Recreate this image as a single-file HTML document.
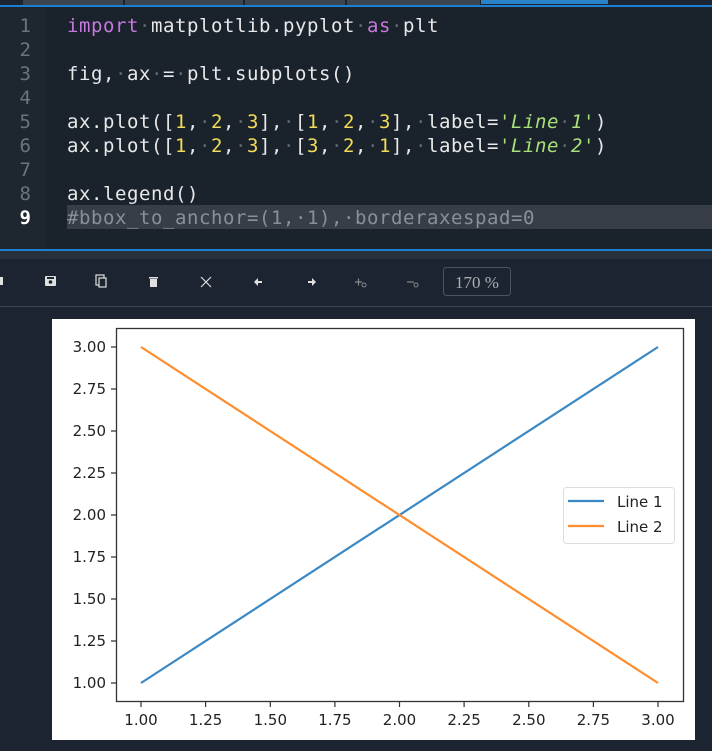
<!DOCTYPE html>
<html><head><meta charset="utf-8"><style>
body{margin:0;width:712px;height:751px;background:#1b2430;overflow:hidden;position:relative;font-family:"Liberation Sans",sans-serif}
.tab{position:absolute;top:0;height:5px;background:#3b444f}
#ed{position:absolute;top:8px;left:0;width:712px;height:241px;background:#1a222c}
#gut{position:absolute;left:0;top:0;width:46px;height:241px;background:#1e2630}
.ln{position:absolute;left:0;width:31px;text-align:right;font:19px "DejaVu Sans Mono",monospace;color:#6c747c;height:24px;line-height:24px}
.cl{position:absolute;left:67px;font:19px "DejaVu Sans Mono",monospace;letter-spacing:0.56px;color:#e8e8e8;white-space:pre;height:24px;line-height:24px}
.k{color:#c678dd}.n{color:#f2dc5a}.s{color:#a8e07a;font-style:italic}.d{color:#5c6670}
</style></head><body>
<div class="tab" style="left:23px;width:100px"></div>
<div class="tab" style="left:125px;width:118px"></div>
<div class="tab" style="left:245px;width:100px"></div>
<div class="tab" style="left:347px;width:133px"></div>
<div class="tab" style="left:481px;width:127px;background:#2b82c8;height:4px"></div>
<div style="position:absolute;top:5px;left:0;width:712px;height:2px;background:#1f7fd0"></div>
<div id="ed"><div id="gut"></div>
<div style="position:absolute;left:67px;top:197px;width:645px;height:24px;background:#373e46"></div>
<div class="ln" style="top:6px">1</div><div class="ln" style="top:30px">2</div><div class="ln" style="top:54px">3</div><div class="ln" style="top:78px">4</div><div class="ln" style="top:102px">5</div><div class="ln" style="top:126px">6</div><div class="ln" style="top:150px">7</div><div class="ln" style="top:174px">8</div><div class="ln" style="top:198px;color:#fff;font-weight:bold">9</div>
<div class="cl" style="top:6px"><span class="k">import</span><span class="d">·</span>matplotlib.pyplot<span class="d">·</span><span class="k">as</span><span class="d">·</span>plt</div>
<div class="cl" style="top:54px">fig,<span class="d">·</span>ax<span class="d">·</span>=<span class="d">·</span>plt.subplots()</div>
<div class="cl" style="top:102px">ax.plot([<span class="n">1</span>,<span class="d">·</span><span class="n">2</span>,<span class="d">·</span><span class="n">3</span>],<span class="d">·</span>[<span class="n">1</span>,<span class="d">·</span><span class="n">2</span>,<span class="d">·</span><span class="n">3</span>],<span class="d">·</span>label=<span class="s">'Line<span class="d">·</span>1'</span>)</div>
<div class="cl" style="top:126px">ax.plot([<span class="n">1</span>,<span class="d">·</span><span class="n">2</span>,<span class="d">·</span><span class="n">3</span>],<span class="d">·</span>[<span class="n">3</span>,<span class="d">·</span><span class="n">2</span>,<span class="d">·</span><span class="n">1</span>],<span class="d">·</span>label=<span class="s">'Line<span class="d">·</span>2'</span>)</div>
<div class="cl" style="top:174px">ax.legend()</div>
<div class="cl" style="top:198px;color:#8a9097">#bbox_to_anchor=(1,·1),·borderaxespad=0</div>
</div>
<div style="position:absolute;top:249px;left:0;width:712px;height:2px;background:#1f7fd0"></div>
<div style="position:absolute;top:251px;left:0;width:712px;height:8px;background:#28313b"></div>
<div style="position:absolute;top:306px;left:0;width:712px;height:1px;background:#3a4550"></div>
<svg style="position:absolute;left:0;top:260px" width="520" height="45" fill="#e0e0e0">
<rect x="0" y="17" width="3" height="8"/>
<rect x="45" y="16" width="11" height="10" rx="1"/><circle cx="50.5" cy="22" r="1.8" fill="#1b2430"/><rect x="47" y="17" width="7" height="2" fill="#1b2430"/>
<rect x="96" y="15" width="8" height="10" fill="none" stroke="#e0e0e0" stroke-width="1.2"/><rect x="99" y="18" width="7" height="9" fill="#1b2430" stroke="#e0e0e0" stroke-width="1.2"/>
<rect x="150" y="19" width="7" height="8"/><rect x="149" y="17" width="9" height="1.5"/>
<path d="M201 17l10 10M211 17l-10 10" stroke="#e0e0e0" stroke-width="1.2"/>
<path d="M254 22l4-4v3h4v2h-4v3z"/><path d="M316 22l-4-4v3h-4v2h4v3z"/>
<path d="M355 22h7M358.5 18.5v7" stroke="#888" stroke-width="1.2"/><circle cx="364" cy="25" r="2" fill="none" stroke="#888"/>
<path d="M407 22h7" stroke="#888" stroke-width="1.2"/><circle cx="416" cy="25" r="2" fill="none" stroke="#888"/>
<rect x="443.5" y="7.5" width="67" height="28" rx="3" fill="none" stroke="#4a5560"/>
<text x="477" y="28" text-anchor="middle" font-family="Liberation Serif" font-size="17" fill="#aab0b6">170 %</text>
</svg>
<svg style="position:absolute;left:52px;top:319px" width="643" height="421">
<rect width="643" height="421" fill="#fff"/>
<g transform="translate(-52,-319)" font-family="DejaVu Sans,sans-serif" font-size="15" fill="#222">
<polyline points="141,683 658,347" fill="none" stroke="#3a88c4" stroke-width="2.2"/>
<polyline points="141,347 658,683" fill="none" stroke="#ff8d2e" stroke-width="2.2"/>
<rect x="116.5" y="328.5" width="567" height="373" fill="none" stroke="#333" stroke-width="1.3"/>
<g stroke="#333" stroke-width="1.2">
<path d="M111 347h5M111 389h5M111 431h5M111 473h5M111 515h5M111 557h5M111 599h5M111 641h5M111 683h5"/>
<path d="M141 702v5M205.6 702v5M270.3 702v5M334.9 702v5M399.5 702v5M464.1 702v5M528.8 702v5M593.4 702v5M658 702v5"/>
</g>
<g text-anchor="end">
<text x="106" y="352">3.00</text><text x="106" y="394">2.75</text><text x="106" y="436">2.50</text><text x="106" y="478">2.25</text><text x="106" y="520">2.00</text><text x="106" y="562">1.75</text><text x="106" y="604">1.50</text><text x="106" y="646">1.25</text><text x="106" y="688">1.00</text>
</g>
<g text-anchor="middle">
<text x="141" y="725">1.00</text><text x="205.6" y="725">1.25</text><text x="270.3" y="725">1.50</text><text x="334.9" y="725">1.75</text><text x="399.5" y="725">2.00</text><text x="464.1" y="725">2.25</text><text x="528.8" y="725">2.50</text><text x="593.4" y="725">2.75</text><text x="658" y="725">3.00</text>
</g>
<rect x="563.5" y="487.5" width="111" height="56" rx="3" fill="#fff" stroke="#ddd"/>
<path d="M568 501h36" stroke="#3a88c4" stroke-width="2.2"/><path d="M568 526h36" stroke="#ff8d2e" stroke-width="2.2"/>
<text x="617" y="507">Line 1</text><text x="617" y="532">Line 2</text>
</g></svg>
</body></html>
